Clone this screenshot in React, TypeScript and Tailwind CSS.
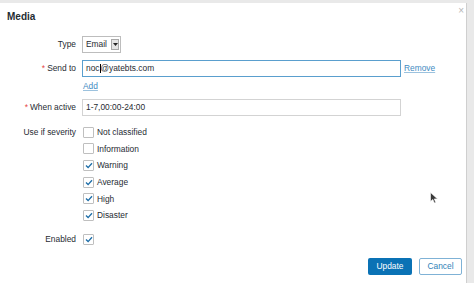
import React from 'react';

const font = { fontFamily: '"Liberation Sans", Arial, sans-serif' };

function Check({ checked }: { checked: boolean }) {
    return (
        <span className="flex items-center justify-center w-[11px] h-[11px] border border-[#bfbfbf] bg-white rounded-[1px]">
            {checked && (
                <svg width="8" height="7" viewBox="0 0 8 7">
                    <path d="M1 3.6 L3.1 5.6 L7 1.3" fill="none" stroke="#1e6ea8" strokeWidth="1.4" />
                </svg>
            )}
        </span>
    );
}

function Label({ text, required }: { text: string; required?: boolean }) {
    return (
        <div className="w-[76px] shrink-0 text-right text-[#1f2c33] pr-[0px]">
            {required && <span className="text-[#e54444] mr-[2px]">*</span>}
            {text}
        </div>
    );
}

const severities = [
    { name: 'Not classified', on: false },
    { name: 'Information', on: false },
    { name: 'Warning', on: true },
    { name: 'Average', on: true },
    { name: 'High', on: true },
    { name: 'Disaster', on: true },
];

export default function App() {
    return (
        <div className="w-[474px] h-[283px] bg-[#e9e9e9] flex overflow-hidden text-[8.4px] leading-none" style={font}>
            <div className="w-[467px] h-[280px] mt-[3px] bg-white border-r border-[#cfcfcf] flex flex-col relative">
                <span className="absolute right-[2px] top-[3px] text-[#b5b5b5] text-[10px]">×</span>

                {/* header */}
                <div className="h-[27px] flex items-center pl-[7px] pt-[1px]">
                    <h1 className="text-[10px] font-bold text-[#1f2c33]">Media</h1>
                </div>

                <div className="flex flex-col mt-[6px]">
                    {/* Type */}
                    <div className="flex items-center gap-[6px] h-[17px]">
                        <Label text="Type" />
                        <div className="flex items-stretch h-[17px] w-[39px] border border-[#bdbdbd] bg-white">
                            <span className="flex-1 flex items-center pl-[3px] text-[#1f2c33]">Email</span>
                            <span className="w-[8px] my-[2px] mr-[1px] bg-[#e4e4e4] border border-[#a8a8a8] flex items-center justify-center">
                                <svg width="5" height="3" viewBox="0 0 5 3"><path d="M0 0h5L2.5 3z" fill="#222" /></svg>
                            </span>
                        </div>
                    </div>

                    {/* Send to */}
                    <div className="flex items-center gap-[6px] h-[17px] mt-[7px]">
                        <Label text="Send to" required />
                        <div className="w-[319px] h-[17px] border border-[#5a9fce] flex items-center pl-[3px] text-[#1f2c33]">
                            noc<span className="inline-block w-px h-[9px] bg-black"></span>@yatebts.com
                        </div>
                        <a className="ml-[-3px] text-[#3f8bc2] underline decoration-[#9cc2de]">Remove</a>
                    </div>

                    {/* Add */}
                    <div className="flex items-center h-[16px] mt-[1px] pl-[83px]">
                        <a className="text-[#3f8bc2] underline decoration-[#9cc2de]">Add</a>
                    </div>

                    {/* When active */}
                    <div className="flex items-center gap-[6px] h-[17px] mt-[5px]">
                        <Label text="When active" required />
                        <div className="w-[319px] h-[17px] border border-[#d3d3d3] flex items-center pl-[3px] text-[#1f2c33]">
                            1-7,00:00-24:00
                        </div>
                    </div>

                    {/* Severity */}
                    <div className="flex gap-[6px] mt-[8px]">
                        <div className="h-[16.7px] flex items-center">
                            <Label text="Use if severity" />
                        </div>
                        <div className="flex flex-col">
                            {severities.map((s) => (
                                <div key={s.name} className="h-[16.67px] flex items-center gap-[3px] pl-[1px] text-[#1f2c33]">
                                    <Check checked={s.on} />
                                    <span>{s.name}</span>
                                </div>
                            ))}
                        </div>
                    </div>

                    {/* Enabled */}
                    <div className="flex items-center gap-[6px] h-[17px] mt-[7px]">
                        <Label text="Enabled" />
                        <div className="pl-[1px]">
                            <Check checked />
                        </div>
                    </div>

                    {/* Buttons */}
                    <div className="flex justify-end gap-[7px] pr-[4px] mt-[10px]">
                        <button className="w-[44px] h-[17px] bg-[#0a72b5] text-white rounded-[2px]">Update</button>
                        <button className="w-[43px] h-[17px] bg-white border border-[#7fb2d6] text-[#2f7fb8] rounded-[2px]">Cancel</button>
                    </div>
                </div>

                {/* mouse pointer */}
                <svg className="absolute left-[430px] top-[189px]" width="8" height="12" viewBox="0 0 8 12">
                    <path d="M0.5 0.5 L0.5 9.5 L2.8 7.4 L4.4 11 L5.8 10.4 L4.3 6.9 L7.5 6.9 Z" fill="#3a3a3a" stroke="#fff" strokeWidth="0.6" />
                </svg>
            </div>
        </div>
    );
}
